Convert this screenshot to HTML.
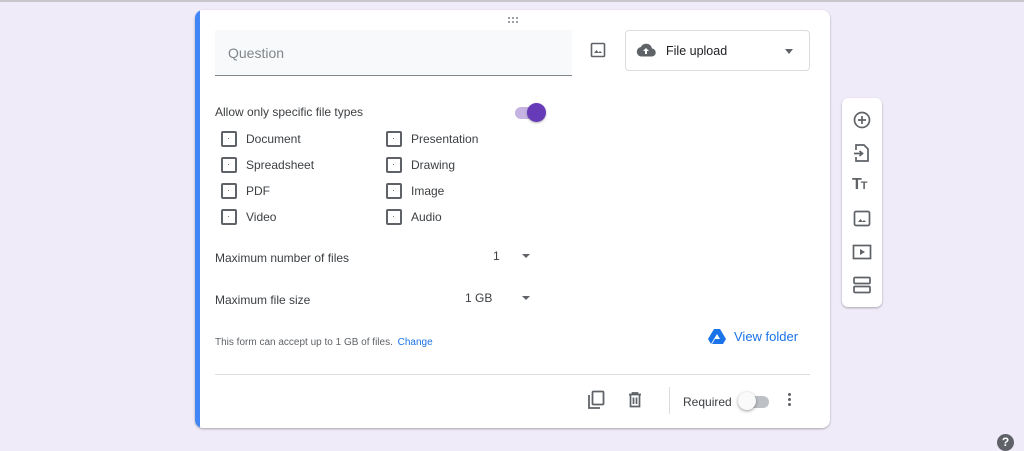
<!DOCTYPE html>
<html><head><style>
*{box-sizing:border-box;margin:0;padding:0}
body{width:1024px;height:447px;background:#f0ebf8;font-family:"Liberation Sans",Arial,sans-serif;position:relative;overflow:hidden;color:#202124}
.topline{position:absolute;left:0;top:0;width:1024px;height:2px;background:#c8c6cc}
.card{position:absolute;left:195px;top:10px;width:635px;height:418px;background:#fff;border-radius:8px;box-shadow:0 1px 2px rgba(0,0,0,.3);overflow:hidden}
.card:before{content:"";position:absolute;left:0;top:0;bottom:0;width:5px;background:#4285f4}
.a{position:absolute}
.q{left:20px;top:20px;width:357px;height:46px;background:#f8f9fa;border-bottom:1px solid #80868b;font-size:14px;color:#80868b;padding:15px 0 0 13px}
.sel{left:430px;top:20px;width:185px;height:41px;border:1px solid #dadce0;border-radius:4px;font-size:12.5px;color:#202124}
.t{font-size:12px;color:#3c4043}
.cb{position:absolute;width:16px;height:16px;border:2px solid #5f6368;border-radius:2px}
.cb:after{content:"";position:absolute;left:5px;top:5px;width:1px;height:1px;background:#777}
.side{position:absolute;left:842px;top:98px;width:40px;height:209px;background:#fff;border-radius:6px;box-shadow:0 1px 2px rgba(0,0,0,.3)}
.dot{position:absolute;width:2px;height:2px;background:#9aa0a6}
</style></head><body>
<div class="topline"></div>
<div class="card">
 <div class="dot" style="left:313px;top:7px"></div><div class="dot" style="left:317px;top:7px"></div><div class="dot" style="left:321px;top:7px"></div>
 <div class="dot" style="left:313px;top:11px"></div><div class="dot" style="left:317px;top:11px"></div><div class="dot" style="left:321px;top:11px"></div>
 <div class="a q">Question</div>
 <svg class="a" style="left:395px;top:32px" width="16" height="16" viewBox="0 0 16 16"><rect x="1.5" y="1.5" width="13" height="13" rx="1" fill="none" stroke="#5f6368" stroke-width="1.6"/><path d="M4 11l2.5-3 2 2.5 1.5-1.5 2 2z" fill="#5f6368"/></svg>
 <div class="a sel">
  <svg class="a" style="left:10px;top:11px" width="20" height="16" viewBox="0 0 20 16"><path d="M16 6.5A6 6 0 0 0 4.8 5 4.8 4.8 0 0 0 5 14.5h10.5a4 4 0 0 0 .5-8z" fill="#5f6368"/><path d="M10 6l-3 3h2v3h2V9h2z" fill="#fff"/></svg>
  <div class="a" style="left:40px;top:13px">File upload</div>
  <div class="a" style="left:159px;top:18px;border:4px solid transparent;border-top:5px solid #5f6368;border-bottom:0"></div>
 </div>
 <div class="a t" style="left:20px;top:95px">Allow only specific file types</div>
 <div class="a" style="left:320px;top:97px;width:30px;height:12px;border-radius:6px;background:#c5b4e3"></div>
 <div class="a" style="left:332px;top:93px;width:19px;height:19px;border-radius:50%;background:#673ab7;box-shadow:0 1px 2px rgba(0,0,0,.3)"></div>
 <div class="cb" style="left:26px;top:121px"></div><div class="a t" style="left:51px;top:122px">Document</div>
 <div class="cb" style="left:26px;top:147px"></div><div class="a t" style="left:51px;top:148px">Spreadsheet</div>
 <div class="cb" style="left:26px;top:173px"></div><div class="a t" style="left:51px;top:174px">PDF</div>
 <div class="cb" style="left:26px;top:199px"></div><div class="a t" style="left:51px;top:200px">Video</div>
 <div class="cb" style="left:191px;top:121px"></div><div class="a t" style="left:216px;top:122px">Presentation</div>
 <div class="cb" style="left:191px;top:147px"></div><div class="a t" style="left:216px;top:148px">Drawing</div>
 <div class="cb" style="left:191px;top:173px"></div><div class="a t" style="left:216px;top:174px">Image</div>
 <div class="cb" style="left:191px;top:199px"></div><div class="a t" style="left:216px;top:200px">Audio</div>
 <div class="a t" style="left:20px;top:241px">Maximum number of files</div>
 <div class="a t" style="left:298px;top:239px">1</div>
 <div class="a" style="left:327px;top:244px;border:4px solid transparent;border-top:4px solid #5f6368;border-bottom:0"></div>
 <div class="a t" style="left:20px;top:283px">Maximum file size</div>
 <div class="a t" style="left:270px;top:281px">1 GB</div>
 <div class="a" style="left:327px;top:286px;border:4px solid transparent;border-top:4px solid #5f6368;border-bottom:0"></div>
 <div class="a" style="left:20px;top:327px;font-size:10px;color:#5f6368">This form can accept up to 1 GB of files. <span style="color:#1a73e8;margin-left:2px">Change</span></div>
 <svg class="a" style="left:513px;top:318px" width="18" height="16" viewBox="0 0 18 16"><path d="M6 1h6l6 10h-6z M6 1l3 5-6 10-3-5z M4 16l3-5h11l-3 5z" fill="#1a73e8"/></svg>
 <div class="a" style="left:539px;top:319px;font-size:13px;color:#1a73e8">View folder</div>
 <div class="a" style="left:20px;top:364px;width:595px;height:1px;background:#dadce0"></div>
 <svg class="a" style="left:391px;top:380px" width="20" height="20" viewBox="0 0 20 20"><path d="M3 5v13h11" fill="none" stroke="#5f6368" stroke-width="1.8"/><rect x="6.5" y="1.5" width="11" height="13" rx="1" fill="none" stroke="#5f6368" stroke-width="1.8"/></svg>
 <svg class="a" style="left:431px;top:381px" width="18" height="18" viewBox="0 0 18 18"><path d="M3 3.5h12M6.5 3.5V2h5v1.5M4.5 4v11.5h9V4M7.5 6.5v6.5M10.5 6.5v6.5" fill="none" stroke="#5f6368" stroke-width="1.7"/></svg>
 <div class="a" style="left:474px;top:377px;width:1px;height:27px;background:#dadce0"></div>
 <div class="a t" style="left:488px;top:385px;font-size:12px">Required</div>
 <div class="a" style="left:546px;top:386px;width:28px;height:12px;border-radius:6px;background:#bdc1c6"></div>
 <div class="a" style="left:543px;top:382px;width:18px;height:18px;border-radius:50%;background:#fafafa;box-shadow:0 1px 3px rgba(0,0,0,.4)"></div>
 <div class="a" style="left:593px;top:383px;width:3px;height:3px;background:#5f6368;border-radius:50%;box-shadow:0 5px 0 #5f6368,0 10px 0 #5f6368"></div>
</div>
<div class="side">
 <svg class="a" style="left:10px;top:12px" width="20" height="20" viewBox="0 0 20 20"><circle cx="10" cy="10" r="7.5" fill="none" stroke="#5f6368" stroke-width="1.7"/><path d="M10 6v8M6 10h8" stroke="#5f6368" stroke-width="1.7"/></svg>
 <svg class="a" style="left:11px;top:45px" width="18" height="20" viewBox="0 0 18 20"><path d="M3 7V2h8l4 4v12H3v-4" fill="none" stroke="#5f6368" stroke-width="1.7"/><path d="M1 10.5h8M6.5 8l3 2.5-3 2.5" fill="none" stroke="#5f6368" stroke-width="1.7"/></svg>
 <div class="a" style="left:10px;top:78px;font-weight:bold;font-size:16px;color:#5f6368;letter-spacing:-1px">T<span style="font-size:11px">T</span></div>
 <svg class="a" style="left:11px;top:112px" width="18" height="18" viewBox="0 0 18 18"><rect x="1.5" y="1.5" width="15" height="14" rx="1.5" fill="none" stroke="#5f6368" stroke-width="1.7"/><path d="M5 12l2.5-3 2 2.5 1.5-1.5 2 2z" fill="#5f6368"/></svg>
 <svg class="a" style="left:10px;top:145px" width="20" height="18" viewBox="0 0 20 18"><rect x="1.5" y="2.5" width="17" height="13" fill="none" stroke="#5f6368" stroke-width="1.7"/><path d="M8 6v6l5-3z" fill="#5f6368"/></svg>
 <svg class="a" style="left:10px;top:177px" width="20" height="20" viewBox="0 0 20 20"><rect x="2" y="2.5" width="16" height="6" rx="1" fill="none" stroke="#5f6368" stroke-width="1.7"/><rect x="2" y="11.5" width="16" height="6" rx="1" fill="none" stroke="#5f6368" stroke-width="1.7"/></svg>
</div>
<div class="a" style="left:997px;top:434px;width:17px;height:17px;border-radius:50%;background:#5f6368;color:#fff;font-size:12px;font-weight:bold;text-align:center;line-height:17px">?</div>
</body></html>
